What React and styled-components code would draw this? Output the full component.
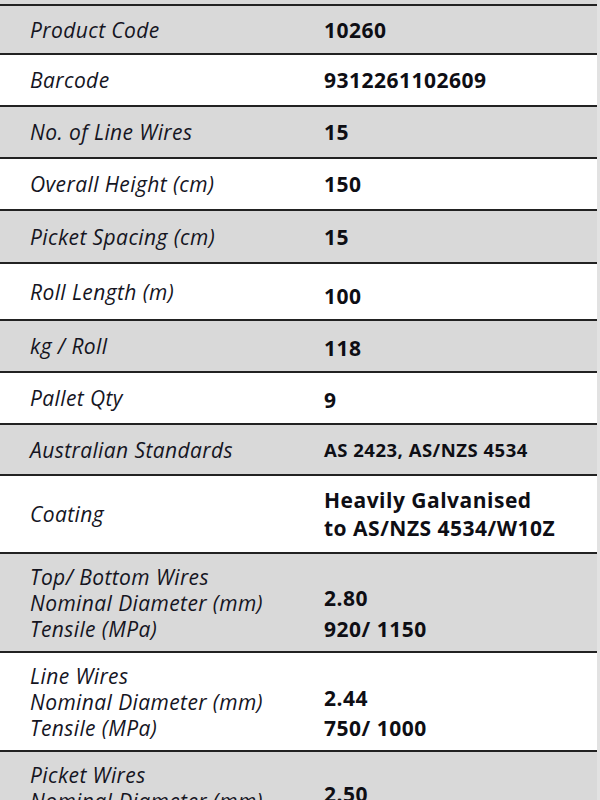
import React from "react";
import styled, { createGlobalStyle } from "styled-components";

const GlobalStyle = createGlobalStyle`
  html, body {
    margin: 0;
    padding: 0;
    background-color: #e2e2e2;
  }
`;

const Sheet = styled.div`
  width: 597px;
  padding-top: 4px;
  background-color: #d9d9d9;
  font-family: "Open Sans", "Noto Sans", sans-serif;
  color: #15151f;
`;

const Row = styled.div`
  display: grid;
  grid-template-columns: 294px 1fr;
  box-sizing: border-box;
  height: ${(p) => p.$h}px;
  padding-left: 30px;
  border-top: 2px solid #222;
  background-color: ${(p) => (p.$shaded ? "#d9d9d9" : "#ffffff")};
`;

const Label = styled.div`
  display: flex;
  flex-direction: column;
  justify-content: center;
  font-style: italic;
  font-size: 21px;
  line-height: 26px;
  letter-spacing: 0.4px;
  white-space: nowrap;
`;

const Value = styled.div`
  display: flex;
  flex-direction: column;
  justify-content: center;
  box-sizing: border-box;
  padding-top: ${(p) => p.$offset || 0}px;
  font-weight: 700;
  font-size: ${(p) => p.$size || 21}px;
  line-height: ${(p) => p.$lh || 28}px;
  letter-spacing: 0.5px;
  color: #0e0e14;
  white-space: nowrap;
`;

const rows = [
  { h: 49, label: ["Product Code"], value: ["10260"] },
  { h: 52, label: ["Barcode"], value: ["9312261102609"] },
  { h: 52, label: ["No. of Line Wires"], value: ["15"] },
  { h: 52, label: ["Overall Height (cm)"], value: ["150"] },
  { h: 53, label: ["Picket Spacing (cm)"], value: ["15"] },
  { h: 57, label: ["Roll Length (m)"], value: ["100"], offset: 8 },
  { h: 52, label: ["kg / Roll"], value: ["118"], offset: 4 },
  { h: 52, label: ["Pallet Qty"], value: ["9"], offset: 4 },
  { h: 51, label: ["Australian Standards"], value: ["AS 2423, AS/NZS 4534"], size: 18.5 },
  { h: 78, label: ["Coating"], value: ["Heavily Galvanised", "to AS/NZS 4534/W10Z"] },
  {
    h: 99,
    label: ["Top/ Bottom Wires", "Nominal Diameter (mm)", "Tensile (MPa)"],
    value: ["2.80", "920/ 1150"],
    offset: 22,
    lh: 31,
  },
  {
    h: 99,
    label: ["Line Wires", "Nominal Diameter (mm)", "Tensile (MPa)"],
    value: ["2.44", "750/ 1000"],
    offset: 22,
    lh: 30,
  },
  {
    h: 99,
    label: ["Picket Wires", "Nominal Diameter (mm)", "Tensile (MPa)"],
    value: ["2.50", "900/ 1150"],
    offset: 18,
    lh: 31,
  },
];

const App = () => {
  return (
    <>
      <GlobalStyle />
      <Sheet>
        {rows.map((row, i) => (
          <Row key={row.label[0]} $h={row.h} $shaded={i % 2 === 0}>
            <Label>
              {row.label.map((line) => (
                <span key={line}>{line}</span>
              ))}
            </Label>
            <Value $offset={row.offset} $size={row.size} $lh={row.lh}>
              {row.value.map((line) => (
                <span key={line}>{line}</span>
              ))}
            </Value>
          </Row>
        ))}
      </Sheet>
    </>
  );
};

export default App;
